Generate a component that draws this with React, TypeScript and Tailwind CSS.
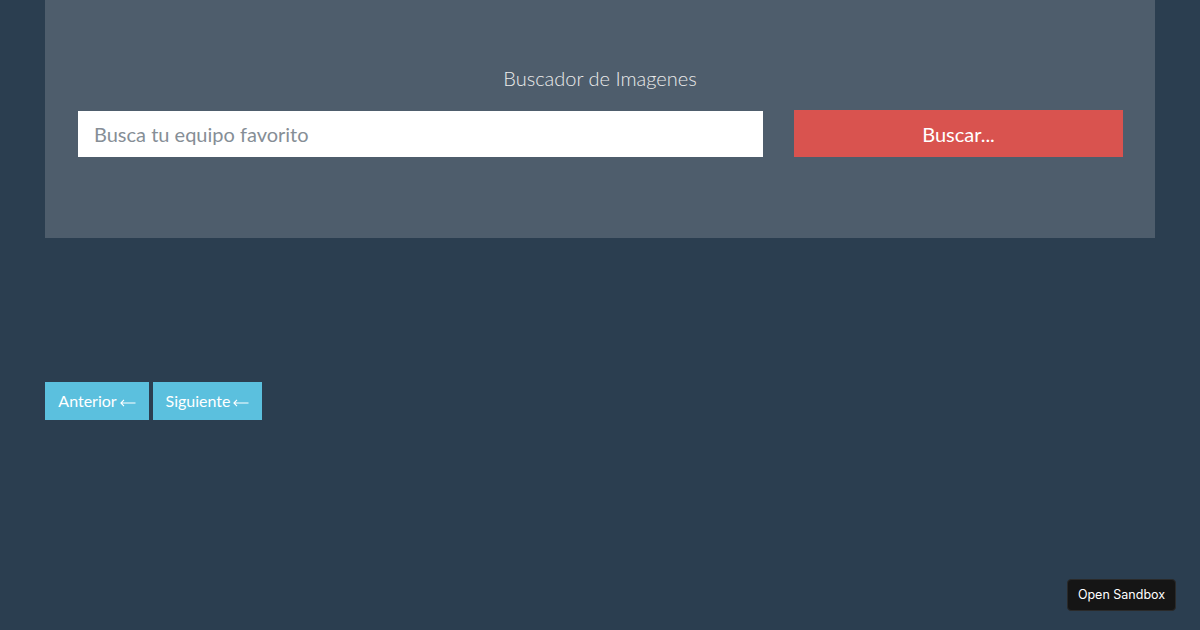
function ArrowLeft() {
  return (
    <svg width="16" height="8" viewBox="0 0 16 8" className="ml-[3px] mt-[4px]" fill="none">
      <path d="M15.5 4H1M4 0.8L0.9 4L4 7.2" stroke="white" strokeWidth="1.1" />
    </svg>
  );
}

export default function App() {
  return (
    <div className="min-h-[630px] w-full bg-[#2b3e50] font-['Lato','Noto_Sans',sans-serif] relative">
      <div className="mx-[45px] h-[238px] bg-[#4e5d6c] pt-[63px]">
        <p className="text-center text-[20px] leading-[30px] font-light text-[#ebebeb]">
          Buscador de Imagenes
        </p>
        <div className="mt-[17px] flex items-start pl-[33px] pr-[32px]">
          <input
            type="text"
            placeholder="Busca tu equipo favorito"
            className="mt-px h-[46px] w-[685px] bg-white px-[16px] text-[20px] text-[#495057] outline-none placeholder:text-[#868e96]"
          />
          <button className="ml-[31px] h-[47px] flex-1 bg-[#d9534f] text-[20px] text-white">
            Buscar...
          </button>
        </div>
      </div>
      <div className="mx-[45px] mt-[144px] flex gap-[4px]">
        <button className="flex h-[38px] w-[104px] items-center justify-center bg-[#5bc0de] text-[16px] text-white">
          <span>Anterior</span>
          <ArrowLeft />
        </button>
        <button className="flex h-[38px] w-[109px] items-center justify-center bg-[#5bc0de] text-[16px] text-white">
          <span>Siguiente</span>
          <ArrowLeft />
        </button>
      </div>
      <div className="absolute left-[1067px] top-[579px] flex h-[32px] w-[109px] items-center justify-center rounded-[4px] border border-[#2a2a2a] bg-[#151515] font-['Inter',sans-serif] text-[12.5px] text-white">
        Open Sandbox
      </div>
    </div>
  );
}
